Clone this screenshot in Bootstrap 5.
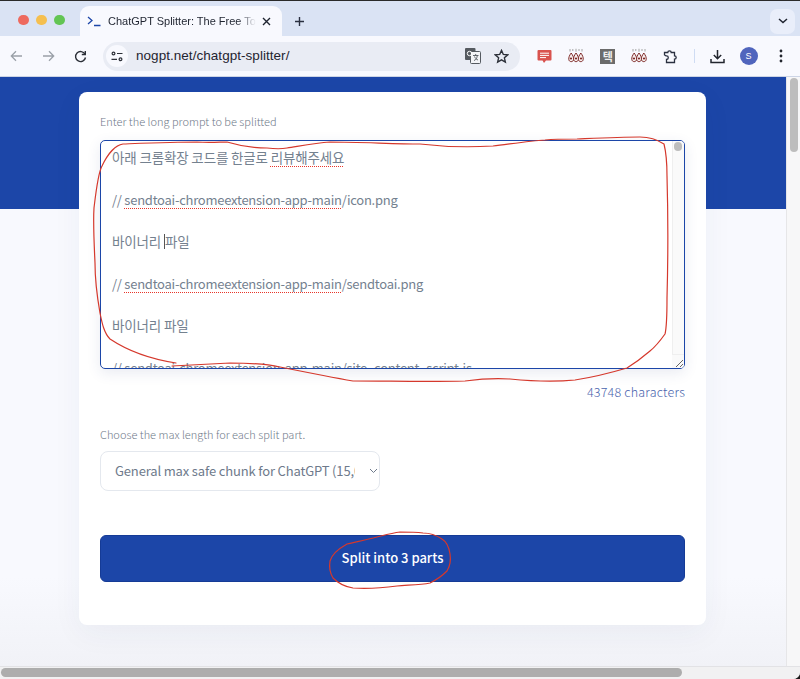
<!DOCTYPE html>
<html lang="en">
<head>
<meta charset="utf-8">
<title>ChatGPT Splitter</title>
<link href="https://cdn.jsdelivr.net/npm/bootstrap@5.3.0/dist/css/bootstrap.min.css" rel="stylesheet">
<style>
html,body{margin:0;height:100%;overflow:hidden;background:#1a1a1a}
body{font-family:"Noto Sans CJK KR","Noto Sans",sans-serif}
.shell{width:800px;height:679px;position:relative;overflow:hidden;border-top:1px solid #2a2a2a;background:#f5f5f7;border-bottom-right-radius:7px}
.tabstrip{height:35px;background:#dae3f4;padding-top:5px;flex:none}
.lights{width:80px;padding-left:18px;gap:7.5px;padding-bottom:2px}
.lights i{display:block;width:10.500px;height:10.500px;border-radius:50%}
.tabx{width:202px;height:30px;background:#f8f9fe;border-radius:9px 9px 0 0;padding:0 7px;font:11px/1 "Liberation Sans",sans-serif;color:#1f2430}
.tabtitle{width:148px;margin-left:7px;white-space:nowrap;overflow:hidden;-webkit-mask-image:linear-gradient(90deg,#000 88%,transparent 100%);mask-image:linear-gradient(90deg,#000 88%,transparent 100%)}
.newtab{margin-left:7px;width:20px}
.tabchev{width:25px;height:25px;border-radius:7px;background:#e9eefa;margin-left:auto;margin-right:5px}
.toolbarx{height:40px;background:#f8f9fe;flex:none}
.slot{width:32px;height:40px;flex:none}
.slot2{width:31.500px;height:40px;flex:none}
.firstext{margin-left:9px}
.omni{width:417px;height:29px;margin-left:7px;background:#e9ecf4;border-radius:15px;flex:none;padding-left:3px}
.omnicon{width:22px;height:22px;border-radius:50%;background:#f8f9fe;flex:none}
.omnitext{font:13.5px/1 "Liberation Sans",sans-serif;color:#1f2430;margin-left:8px;letter-spacing:.04px}
.omnislot{width:28px;height:28px;flex:none}
.omnilast{margin-right:5px}
.sepx{width:1px;height:14px;background:#cfdcf3;margin:0 11px 0 7px}
.avatarx{width:18px;height:18px;border-radius:50%;background:#5065bd;color:#fff;font:9px/18px "Liberation Sans",sans-serif;text-align:center}
.viewportx{height:590px;flex:none;border-top:1px solid #cdd5e6}
.pagex{flex:1 1 auto;background:linear-gradient(#1c46a8 132px,#f8f9fe 132px,#f8f9fe 500px,#f1f2f7 100%);padding:15px 0 0 79px}
.vbar{width:14px;background:#f7f7f8;border-left:1px solid #e6e6e8;flex:none;padding:1px 2px 0 3px}
.vthumb{width:8px;height:74px;background:#bdbdbd;border-radius:4px}
.hbar{height:13px;background:#f1f1f2;border-top:1px solid #e2e2e5;padding:1px 0 0 1px;flex:none}
.hthumb{width:681px;height:9px;background:#adadad;border-radius:5px}
.sheet{width:627px;height:533px;background:#fff;border-radius:8px;padding:21px 21px 0;box-shadow:0 8px 30px rgba(40,50,90,.05)}
.lblx{font-size:11px;font-weight:300;color:#6f7a8a;line-height:17px;display:block;margin-bottom:10px}
.areax{height:229px;border:1.5px solid #1c46a8;border-radius:5px;background:#fff;box-shadow:0 4px 14px rgba(40,60,130,.1);position:relative;overflow:hidden;padding:6px 11px 0;font-size:13.500px;line-height:21px;color:#74818f;white-space:pre;letter-spacing:-.15px}
.areax p{margin:0;height:21px}
.latnx{font-size:13px;letter-spacing:-.25px}
.areax s{text-decoration:underline dotted #e8352a 1px;text-underline-offset:3px}
.caretx{display:inline-block;width:1px;height:15px;background:#555;vertical-align:-2px}
.miniscroll{position:absolute;top:0;right:0;bottom:0;width:12px;background:#fafafa;border-left:1px solid #efefef}
.minithumb{width:8px;height:9px;background:#bdbdbd;border-radius:4px;margin:1px 0 0 1px}
.gripx{position:absolute;right:0;bottom:0;width:12px;height:14px;background:#fafafa;border-top:1px solid #efefef}
.countx{text-align:right;font-size:12.500px;font-weight:300;color:#4a64ad;line-height:18px;margin-top:14px;letter-spacing:.2px}
.lbl2{margin-top:25px;margin-bottom:8px}
.selx{width:280px;height:40px;border:1px solid #e4e8ee;border-radius:8px;background:#fff;font-size:13px;color:#6e7a8b;padding-left:14px;letter-spacing:-.15px;overflow:hidden}
.seltxt{width:240px;overflow:hidden;white-space:nowrap;flex:none}
.chevx{margin-left:14px}
.btnx{display:block;width:585px;height:47px;margin-top:44px;background:#1c46a8;border:1px solid #153b96;border-radius:6px;color:#fff;font-size:13px;font-weight:500;padding:0 0 2px}
.btnx:hover{background:#1c46a8;color:#fff}
.tekx{width:15px;height:15px;background:#6b6b6b;color:#eee;font-size:11px;line-height:15px;text-align:center;font-weight:700}
.inkx{position:absolute;left:0;top:0;pointer-events:none}
</style>
</head>
<body>
<svg width="0" height="0" class="position-absolute"><defs>
<symbol id="bombs" viewBox="0 0 16 16">
<g fill="#f6eeee" stroke="#7e2a28" stroke-width="1"><path d="M3.200 5c-1.800 2.400-2.600 4.400-2.400 6.400.3 3 4.500 3 4.800 0 .2-2-.8-4-2.400-6.400z"/><path d="M12.800 5c-1.600 2.400-2.600 4.400-2.400 6.400.3 3 4.500 3 4.800 0 .2-2-.6-4-2.400-6.400z"/><path d="M8 5c-1.800 2.400-2.600 4.400-2.400 6.400.3 3 4.500 3 4.800 0 .2-2-.6-4-2.400-6.400z"/></g>
<path d="M1.500 1h1v2.500h-1zM4.300 1h1v2h-1zM7.500 .8h1v3h-1zM10.500 1h1v2h-1zM13.500 1h1v2.500h-1z" fill="#a5a5a5"/>
<circle cx="3" cy="10.500" r="1.100" fill="#7e2a28"/><circle cx="8" cy="10.500" r="1.100" fill="#7e2a28"/><circle cx="13" cy="10.500" r="1.100" fill="#7e2a28"/>
</symbol>
</defs></svg>
<div class="shell d-flex flex-column">
  <div class="tabstrip d-flex align-items-end">
    <div class="lights d-flex align-items-center align-self-center"><i style="background:#ee6a5f"></i><i style="background:#f5bf4f"></i><i style="background:#62c554"></i></div>
    <div class="tabx d-flex align-items-center">
      <svg width="14" height="12" viewBox="0 0 14 12" fill="none" stroke="#1c46a8" stroke-width="1.300"><path d="M1 2l4 3.500-4 3.500"/><path d="M7 10.500h6.500"/></svg>
      <div class="tabtitle">ChatGPT Splitter: The Free Tool</div>
      <svg class="ms-auto me-1" width="9" height="9" viewBox="0 0 9 9" stroke="#1f2430" stroke-width="1.400"><path d="M1 1l7 7M8 1L1 8"/></svg>
    </div>
    <div class="newtab d-flex justify-content-center align-self-center"><svg width="11" height="11" viewBox="0 0 11 11" stroke="#2a3040" stroke-width="1.400"><path d="M5.500 1v9M1 5.500h9"/></svg></div>
    <div class="tabchev d-flex align-items-center justify-content-center align-self-center"><svg width="10" height="6" viewBox="0 0 10 6" fill="none" stroke="#1f2430" stroke-width="1.500"><path d="M1 1l4 3.500L9 1"/></svg></div>
  </div>
  <div class="toolbarx d-flex align-items-center ps-0">
    <div class="slot d-flex align-items-center justify-content-center"><svg width="13" height="12" viewBox="0 0 13 12" fill="none" stroke="#9aa0a8" stroke-width="1.300"><path d="M12 6H1.500M6 1.200L1.300 6 6 10.800"/></svg></div>
    <div class="slot d-flex align-items-center justify-content-center"><svg width="13" height="12" viewBox="0 0 13 12" fill="none" stroke="#9aa0a8" stroke-width="1.300"><path d="M1 6h10.500M7 1.200L11.700 6 7 10.800"/></svg></div>
    <div class="slot d-flex align-items-center justify-content-center"><svg width="13" height="13" viewBox="0 0 13 13" fill="none" stroke="#2c3038" stroke-width="1.400"><path d="M11 4.200A5 5 0 1 0 11.500 7.500"/><path d="M11.300 1v3.500H7.800"/></svg></div>
    <div class="omni d-flex align-items-center">
      <div class="omnicon d-flex align-items-center justify-content-center"><svg width="12" height="11" viewBox="0 0 12 11" fill="none" stroke="#2c3038" stroke-width="1.200"><circle cx="2.500" cy="2.500" r="1.400"/><path d="M6 2.500h5.500M.5 8.300H6"/><circle cx="9.500" cy="8.300" r="1.400"/></svg></div>
      <div class="omnitext flex-grow-1">nogpt.net/chatgpt-splitter/</div>
      <div class="omnislot d-flex align-items-center justify-content-center"><svg width="16" height="16" viewBox="0 0 16 16"><rect x="0" y="0" width="10.500" height="12" rx="1" fill="#555a60"/><rect x="5.500" y="3.500" width="10" height="12" rx="1" fill="#f3f4f7" stroke="#555a60"/><circle cx="4.500" cy="5.500" r="2.200" fill="none" stroke="#fff"/><path d="M8 7.500h5.500M10.700 6v1.500M9 12.500c2-.5 3-2.500 3.300-5M9.500 8.500c.5 1.500 2 3 3.500 3.500" fill="none" stroke="#555a60" stroke-width=".9"/></svg></div>
      <div class="omnislot omnilast d-flex align-items-center justify-content-center"><svg width="15" height="15" viewBox="0 0 14 14" fill="none" stroke="#2c3038" stroke-width="1.300"><path d="M7 1.300l1.700 3.800 4.100.4-3.100 2.700.9 4-3.600-2.100-3.600 2.100.9-4-3.100-2.700 4.100-.4z"/></svg></div>
    </div>
    <div class="slot2 firstext d-flex align-items-center justify-content-center"><svg width="15" height="15" viewBox="0 0 15 15"><path d="M1.500 1h12a1 1 0 0 1 1 1v8.500a1 1 0 0 1-1 1H9l-2 2.500-1.500-2.500h-4a1 1 0 0 1-1-1V2a1 1 0 0 1 1-1z" fill="#d9534f"/><path d="M3 4.200h9M3 6.400h9M3 8.600h6" stroke="#fff" stroke-width="1"/></svg></div>
    <div class="slot2 d-flex align-items-center justify-content-center"><svg width="16" height="16"><use href="#bombs"/></svg></div>
    <div class="slot2 d-flex align-items-center justify-content-center"><div class="tekx">텍</div></div>
    <div class="slot2 d-flex align-items-center justify-content-center"><svg width="16" height="16"><use href="#bombs"/></svg></div>
    <div class="slot2 d-flex align-items-center justify-content-center"><svg width="15" height="15" viewBox="0 0 15 15" fill="none" stroke="#2a3040" stroke-width="1.300"><path d="M1.500 3.500h3.300a1.700 1.700 0 0 1 3.400 0h3.300v3.300a1.700 1.700 0 0 1 1.700 1.700 1.700 1.700 0 0 1-1.700 1.700v3.300H3.500v-3a1.800 1.800 0 0 0 0-3.600c-.8 0-1.500-.5-2-1z"/></svg></div>
    <div class="sepx"></div>
    <div class="d-flex align-items-center justify-content-center" style="width:24px"><svg width="15" height="15" viewBox="0 0 15 15" fill="none" stroke="#22262e" stroke-width="1.500"><path d="M7.500 1v8.500M3.800 6l3.700 3.700L11.200 6"/><path d="M1 10v3.500h13V10"/></svg></div>
    <div class="d-flex align-items-center justify-content-center" style="width:38px"><div class="avatarx">S</div></div>
    <div class="d-flex align-items-center justify-content-center" style="width:26px"><svg width="4" height="14" viewBox="0 0 4 14" fill="#22262e"><circle cx="2" cy="2" r="1.400"/><circle cx="2" cy="7" r="1.400"/><circle cx="2" cy="12" r="1.400"/></svg></div>
  </div>
  <div class="viewportx d-flex">
    <div class="pagex">
      <div class="sheet">
        <label class="lblx">Enter the long prompt to be splitted</label>
        <div class="areax"><p>아래 크롬확장 코드를 한글로 <s>리뷰해주세요</s></p><p> </p><p class="latnx">// <s>sendtoai-chromeextension-app-main</s>/icon.png</p><p> </p><p>바이너리 <span class="caretx"></span>파일</p><p> </p><p class="latnx">// <s>sendtoai-chromeextension-app-main</s>/sendtoai.png</p><p> </p><p>바이너리 파일</p><p> </p><p class="latnx">// sendtoai-chromeextension-app-main/site_content_script.js</p>
          <div class="miniscroll"><div class="minithumb"></div></div>
          <div class="gripx"><svg class="d-block position-absolute bottom-0 end-0" width="9" height="9" viewBox="0 0 9 9" stroke="#666" fill="none"><path d="M1 8l7-7M5 8l3-3"/></svg></div>
        </div>
        <div class="countx">43748 characters</div>
        <label class="lblx lbl2">Choose the max length for each split part.</label>
        <div class="selx d-flex align-items-center">
          <div class="seltxt">General max safe chunk for ChatGPT (15,000 characters)</div>
          <svg class="chevx" width="9" height="6" viewBox="0 0 9 6" fill="none" stroke="#6e7a8b"><path d="M1 1l3.500 3.500L8 1"/></svg>
        </div>
        <button type="button" class="btn btnx">Split into 3 parts</button>
      </div>
    </div>
    <div class="vbar"><div class="vthumb"></div></div>
  </div>
  <div class="hbar"><div class="hthumb"></div></div>
  <svg class="inkx" width="800" height="679" viewBox="0 0 800 679" fill="none" stroke="#d5382c" stroke-width="1.200" stroke-linecap="round" stroke-linejoin="round">
    <path d="M176 362C150 358 128 350 110 338C104 332 102 322 100 312C97 295 95 280 95 262C94 240 93 222 94 207C96 190 98 172 102 165C108 152 116 144 123 143C150 142 175 141 197 141C210 142 220 141 227 141C240 145 252 147 267 147C275 148 282 148 287 147C300 145 315 142 330 141C360 141 395 143 420 143C445 146 475 146 493 145C510 143 530 140 545 139C555 138 565 138 577 138C600 137 620 136 640 136C650 136 658 139 664 143C667 155 667 165 667 175C668 210 668 260 667 297C667 315 667 325 665 333C660 340 655 346 650 350C643 356 635 362 627 367C610 372 595 376 575 379C555 381 530 380 510 378C495 377 480 378 465 380C430 381 390 380 353 380C330 376 305 371 280 366C262 362 245 362 230 362C212 363 192 364 172 365"/>
    <path d="M450 553C449 546 447 541 442 538C436 534 430 532 423 532C415 531 408 531 400 531C392 532 385 534 377 536C366 539 355 541 347 543C338 548 332 553 330 560C329 566 330 572 333 577C339 583 346 586 353 587C368 588 382 587 397 585C408 584 420 584 430 582C438 578 443 574 447 570C450 565 451 559 450 553Z"/>
  </svg>
</div>
<script src="https://cdn.jsdelivr.net/npm/bootstrap@5.3.0/dist/js/bootstrap.bundle.min.js"></script>
</body>
</html>
